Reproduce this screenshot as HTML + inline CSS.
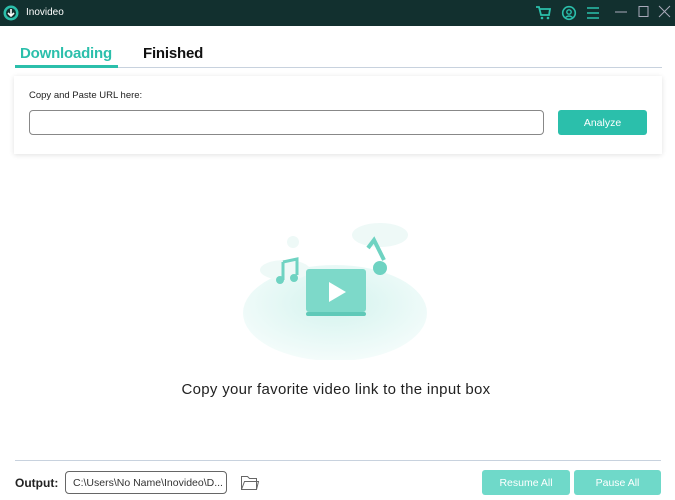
<!DOCTYPE html>
<html><head><style>
*{margin:0;padding:0;box-sizing:border-box}
body{width:675px;height:500px;background:#fff;font-family:"Liberation Sans",sans-serif;position:relative;overflow:hidden}
.tb{position:absolute;left:0;top:0;width:675px;height:26px;background:#12302f}
.abs{position:absolute}
.btn{display:flex;align-items:center;justify-content:center}
</style></head><body>
<div class="tb">
 <svg class="abs" style="left:3px;top:5px" width="16" height="16"><circle cx="8" cy="8" r="7.5" fill="#2bbfab"/><circle cx="8" cy="8" r="5" fill="#12302f"/><path d="M8 4v7M5 8l3 3 3-3" stroke="#fff" stroke-width="1.6" fill="none"/></svg>
 <div class="abs" style="left:26px;top:7px;color:#fff;font-size:10px">Inovideo</div>
 <svg class="abs" style="left:535px;top:5px" width="16" height="16"><path d="M1 2h3l2 8h8l1-6H5" stroke="#2bbfab" stroke-width="1.8" fill="none"/><circle cx="7" cy="13" r="1.3" fill="#2bbfab"/><circle cx="13" cy="13" r="1.3" fill="#2bbfab"/></svg>
 <svg class="abs" style="left:561px;top:5px" width="16" height="16"><circle cx="8" cy="8" r="6.3" stroke="#2bbfab" stroke-width="1.6" fill="none"/><circle cx="8" cy="7" r="2.2" stroke="#2bbfab" stroke-width="1.4" fill="none"/><path d="M4.5 12.5q3.5-3 7 0" stroke="#2bbfab" stroke-width="1.4" fill="none"/></svg>
 <svg class="abs" style="left:586px;top:6px" width="14" height="14"><path d="M1 2h12M1 7h12M1 12h12" stroke="#2bbfab" stroke-width="1.6"/></svg>
 <svg class="abs" style="left:614px;top:6px" width="14" height="14"><path d="M1 6h12" stroke="#aab" stroke-width="1"/></svg>
 <svg class="abs" style="left:637px;top:5px" width="14" height="14"><rect x="2" y="1.5" width="9" height="10" stroke="#aab" fill="none"/></svg>
 <svg class="abs" style="left:658px;top:5px" width="14" height="14"><path d="M1 1l11 11M12 1L1 12" stroke="#aab"/></svg>
</div>
<div class="abs" style="left:20px;top:45px;font-size:15px;font-weight:bold;color:#2bbfab;letter-spacing:-0.2px">Downloading</div>
<div class="abs" style="left:143px;top:45px;font-size:15px;font-weight:bold;color:#111;letter-spacing:-0.2px">Finished</div>
<div class="abs" style="left:118px;top:67px;width:544px;height:1px;background:#c8d2de"></div>
<div class="abs" style="left:15px;top:65px;width:103px;height:3px;background:#2bbfab"></div>
<div class="abs" style="left:14px;top:76px;width:648px;height:78px;background:#fff;box-shadow:0 1px 5px rgba(0,0,0,.12)">
 <div class="abs" style="left:15px;top:14px;font-size:9.5px;color:#222">Copy and Paste URL here:</div>
 <div class="abs" style="left:15px;top:34px;width:515px;height:25px;border:1px solid #888;border-radius:4px"></div>
 <div class="abs btn" style="left:544px;top:34px;width:89px;height:25px;background:#2bbfab;border-radius:3px;color:#fff;font-size:10.5px">Analyze</div>
</div>
<svg class="abs" style="left:230px;top:210px" width="210" height="150">
 <defs><radialGradient id="g" cx="50%" cy="40%" r="60%"><stop offset="0" stop-color="#d4f3ee"/><stop offset="1" stop-color="#f4fcfb"/></radialGradient></defs>
 <ellipse cx="105" cy="103" rx="92" ry="48" fill="url(#g)"/>
 <ellipse cx="150" cy="25" rx="28" ry="12" fill="#eef9f7"/>
 <ellipse cx="55" cy="60" rx="25" ry="10" fill="#eef9f7"/>
 <circle cx="63" cy="32" r="6" fill="#eef9f7"/>
 <rect x="76" y="59" width="60" height="43" rx="3" fill="#7dd9c9"/>
 <rect x="76" y="102" width="60" height="4" rx="2" fill="#5fc9b8"/>
 <path d="M99 72v20l17-10z" fill="#fff"/>
 <path d="M53 52l14-3v16M53 52v18" stroke="#6fd3c2" stroke-width="3" fill="none"/>
 <circle cx="50" cy="70" r="4" fill="#6fd3c2"/><circle cx="64" cy="68" r="4" fill="#6fd3c2"/>
 <path d="M138 38l6-8 10 20" stroke="#6fd3c2" stroke-width="4" fill="none"/>
 <circle cx="150" cy="58" r="7" fill="#6fd3c2"/>
</svg>
<div class="abs" style="left:0;top:381px;width:672px;text-align:center;font-size:15px;color:#222;letter-spacing:0.3px">Copy your favorite video link to the input box</div>
<div class="abs" style="left:15px;top:460px;width:646px;height:1px;background:#c8d2de"></div>
<div class="abs" style="left:15px;top:476px;font-size:12px;font-weight:bold;color:#222">Output:</div>
<div class="abs" style="left:65px;top:471px;width:162px;height:23px;border:1px solid #666;border-radius:4px;font-size:10.5px;color:#333;padding:5px 0 0 7px;white-space:nowrap;overflow:hidden">C:\Users\No Name\Inovideo\D...</div>
<svg class="abs" style="left:240px;top:474px" width="20" height="18"><path d="M1.5 2.5h6l2 2h7v11h-15zM1.5 15.5l3-8h14l-2 8" stroke="#666" fill="none"/></svg>
<div class="abs btn" style="left:482px;top:470px;width:88px;height:25px;background:#6fd9c9;border-radius:3px;color:#fff;font-size:10.5px">Resume All</div>
<div class="abs btn" style="left:574px;top:470px;width:87px;height:25px;background:#6fd9c9;border-radius:3px;color:#fff;font-size:10.5px">Pause All</div>
</body></html>
